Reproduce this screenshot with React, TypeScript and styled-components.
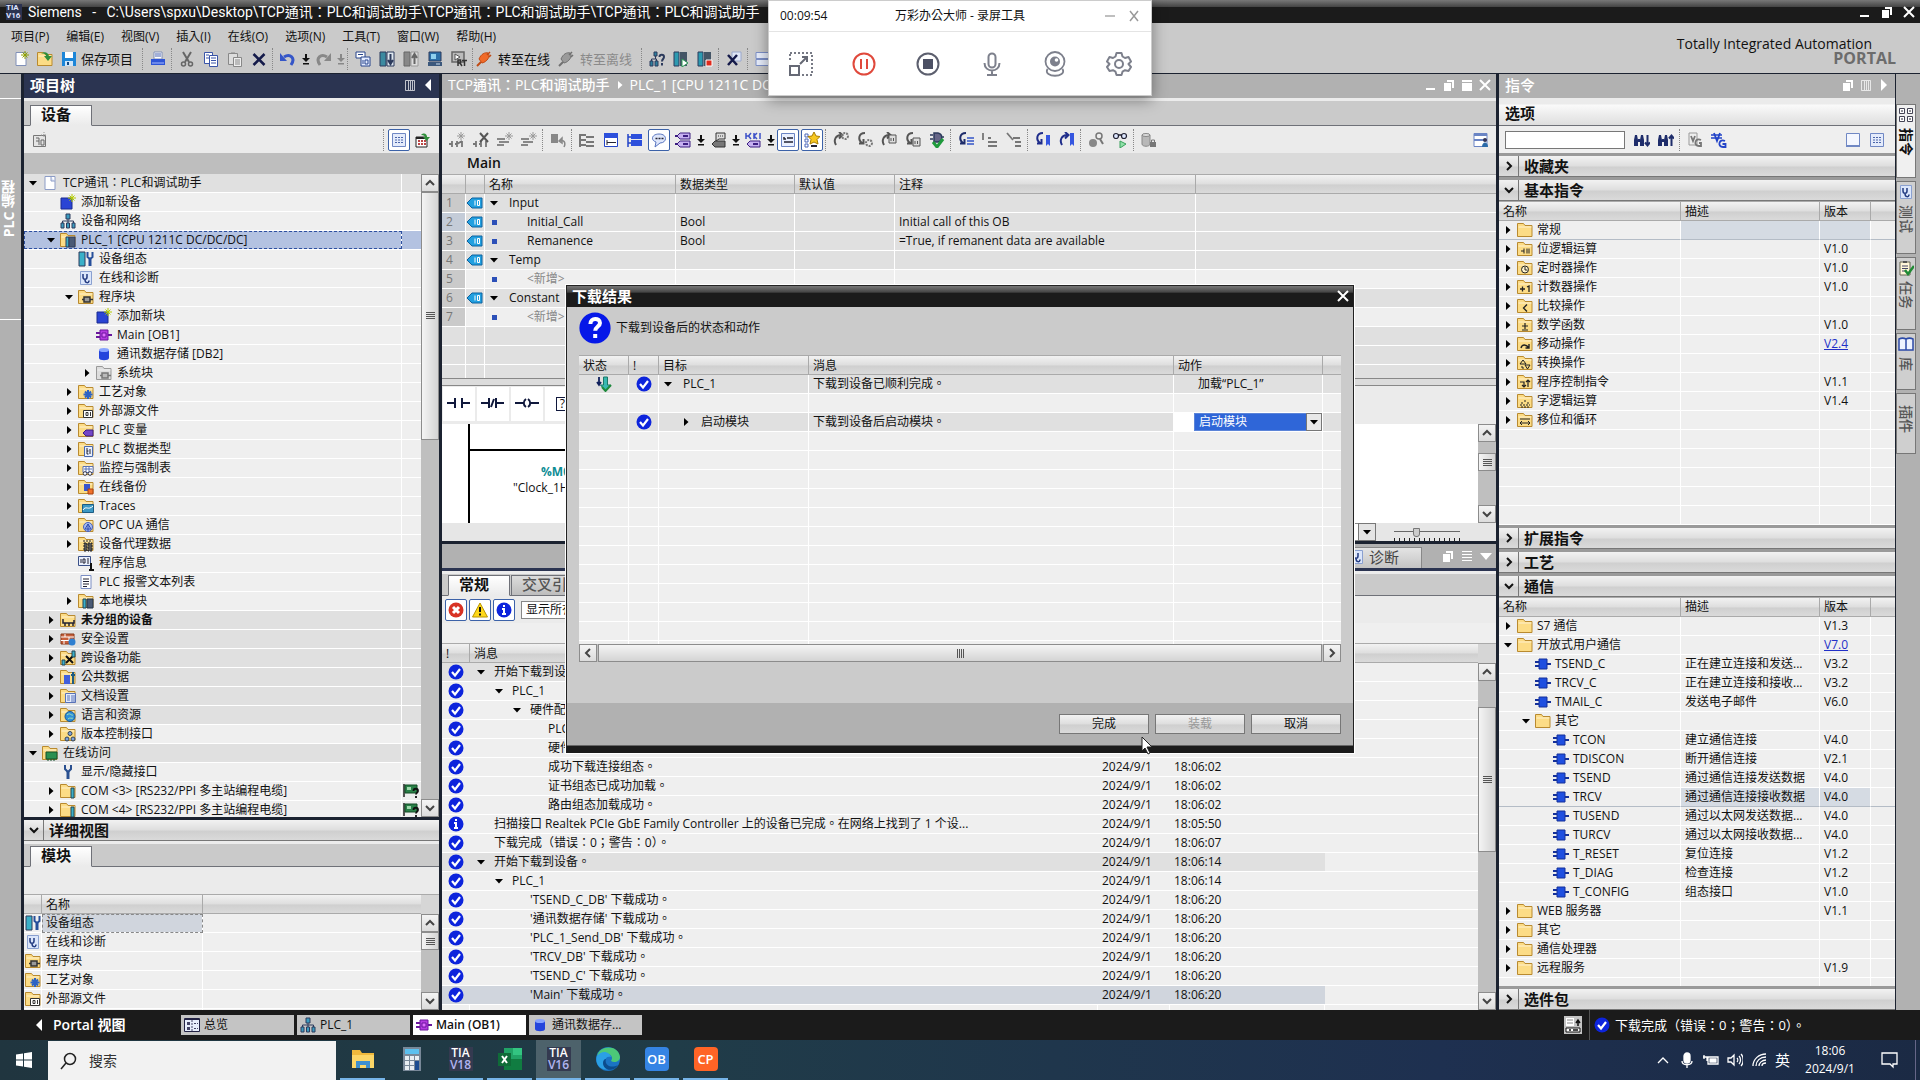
import React, { ReactNode } from 'react';
import styled, { createGlobalStyle, css } from 'styled-components';

const Global = createGlobalStyle`
  *, *::before, *::after { box-sizing: border-box; }
  body { margin: 0; overflow: hidden; font: 12px/18px "Open Sans", "Noto Sans CJK TC", "Noto Sans CJK SC", sans-serif; color: #111; }
  button, input, select { font: inherit; color: inherit; margin: 0; border-radius: 0; }
  button { background: none; border: 0; padding: 0; }
  ul { list-style: none; margin: 0; padding: 0; }
  h1, h2, h3, p { margin: 0; font: inherit; }
  svg { display: block; flex: none; }
`;

/* ---------- icons ---------- */
const dark = '#2c3a5c';
const grey = '#777';
const folder = (badge?: ReactNode, fill = '#fcdc86', line = '#b98a2f') => (
  <>
    <path d="M.500 1.500h6l1.500 2h7v11h-14.500z" fill={fill} stroke={line} />
    <path d="M1.500 5h13" stroke="#fff" opacity=".6" />
    {badge}
  </>
);
const block = (fill: string, line: string) => (
  <>
    <path d="M0 6h4M0 10h4M12 8h4" stroke={line} strokeWidth="2" />
    <path d="M4 3h8v10h-8z" fill={fill} stroke={line} />
  </>
);
const cylinder = (a: string, b: string) => (
  <>
    <path d="M3 4v8c0 3 10 3 10 0V4z" fill={a} />
    <ellipse cx="8" cy="4" rx="5" ry="2" fill={b} />
  </>
);
const page = (line = '#5a6ea8', inner?: ReactNode) => (
  <>
    <path d="M3 1.500h10v13h-10z" fill="#fff" stroke={line} />
    {inner}
  </>
);
const spark = (c: string) => <path d="M12 0v8M8 4h8M9.500 1.500l5 5M14.500 1.500l-5 5" stroke={c} strokeWidth="1" />;
const lines = (c: string) => <path d="M5 5h6M5 7.500h6M5 10h6M5 12.500h4" stroke={c} />;
const binoc = (up: boolean) => (
  <>
    <path d="M0 8l1-5h2l1 5v6H0zM6 8l1-5h2l1 5v6H6zM4 7h2v3H4z" fill="#1f2d6b" />
    <path d={up ? 'M13.500 14V4M11 6.500L13.500 3.500l2.500 3' : 'M13.500 3v10M11 10.500l2.500 3 2.500-3'} stroke="#1f2d6b" strokeWidth="2" fill="none" />
  </>
);
const plug = (c: string, d: string) => (
  <>
    <path d="M1 15l4-4" stroke={d} strokeWidth="2" />
    <path d="M3 8c2-5 6-7 9-6c3 3-1 9-6 10z" fill={c} stroke={d} />
    <path d="M11 4l3-3M13 6l2-2" stroke={d} strokeWidth="1.500" />
  </>
);
const stetho = (
  <>
    <path d="M2.500 1.500h11v13h-11z" fill="#dbe6fb" stroke="#8aa0d0" />
    <path d="M5 4v3c0 3 4 3 4 0V4M7 9.500c0 4 4 4 4 1" fill="none" stroke="#223a80" strokeWidth="1.500" />
  </>
);
const hop = (mirror: boolean, c: string, extra: ReactNode) => (
  <>
    <path d={mirror ? 'M8 1C1 1 1 8 5 11M2 11.500h4.500V7' : 'M3 13C0 8 3 3 8 3M6 0l3.500 3L6 6.500'} fill="none" stroke={c} strokeWidth="2" />
    {extra}
  </>
);
const gearDot = <circle cx="12" cy="11" r="3" fill="none" stroke={grey} strokeWidth="2" strokeDasharray="2 1" />;
const gearDotTop = <circle cx="12" cy="4" r="3" fill="none" stroke={grey} strokeWidth="2" strokeDasharray="2 1" />;
const chip = (y: number) => <path d={`M8 ${y}h7v8h-7zM10 ${y + 3}v3M12.500 ${y + 3}v3`} fill="#ddd" stroke="#555" />;

const icons: Record<string, ReactNode> = {
  newProject: <>{page('#8090b8')}{spark('#8ea000')}</>,
  openProject: <>{folder()}<path d="M4 3c3-3 7-2 8 2h3l-4 5-4-5h2c0-2-2-3-5-2z" fill="#2f8f3a" /></>,
  save: <><path d="M1 1h14v14h-14z" fill="#1d86d8" /><path d="M4 1h8v6h-8z" fill="#fff" /><path d="M4 10h8v5h-8z" fill="#cfe6fa" /><path d="M6 11h2v3h-2z" fill="#124a86" /></>,
  print: <><path d="M4 1h8v7h-8z" fill="#fff" stroke="#8090b8" /><path d="M5 3h6M5 5h6" stroke="#4660b0" /><path d="M1 8h14v6h-14z" fill="#2f55d6" /><path d="M2 12h12" stroke="#a9bcff" /></>,
  cut: <><path d="M4 1l6 10M12 1L6 11" stroke="#666" strokeWidth="2" /><circle cx="4.500" cy="13" r="2" fill="none" stroke="#666" strokeWidth="1.500" /><circle cx="11.500" cy="13" r="2" fill="none" stroke="#666" strokeWidth="1.500" /></>,
  copy: <><path d="M1.500 1.500h8v11h-8z" fill="#fff" stroke="#3a55a8" /><path d="M6.500 4.500h8v11h-8z" fill="#fff" stroke="#3a55a8" /><path d="M3 4h3M3 7h3M8 7h5M8 9.500h5M8 12h5" stroke="#3a55a8" /></>,
  paste: <><path d="M1.500 2.500h9v11h-9z" fill="#ddd" stroke="#888" /><path d="M6.500 6.500h8v9h-8z" fill="#eee" stroke="#888" /><path d="M8 9h5M8 11h5M8 13h5M4 2h4" stroke="#888" /></>,
  del: <path d="M2.500 3l11 11M13.500 3l-11 11" stroke="#141a4a" strokeWidth="2.500" />,
  undo: <><path d="M4 6c6-4 12 1 7 8" fill="none" stroke="#3556c8" strokeWidth="3" /><path d="M0 2v8h7z" fill="#3556c8" /></>,
  redo: <><path d="M12 6C6 2 0 7 5 14" fill="none" stroke="#888" strokeWidth="3" /><path d="M16 2v8H9z" fill="#888" /></>,
  compile: <><path d="M1 1h9v6h-9z" fill="#fff" stroke="#26448c" /><path d="M6 6h9v9h-9z" fill="#e4ecff" stroke="#26448c" /><path d="M3 3.500h5M8 9v4M10 9h3v4h-3z" stroke="#26448c" fill="none" /></>,
  download: <><path d="M1 1h6v14h-6z" fill="#3c8aa0" stroke={dark} /><path d="M8 1h7v14h-7z" fill="#dfe8f0" stroke={dark} /><path d="M11.500 3v9M9 9l2.500 4 2.500-4" stroke={dark} strokeWidth="2" fill="none" /></>,
  upload: <><path d="M1 1h6v14h-6z" fill="#888" stroke="#666" /><path d="M8 1h7v14h-7z" fill="#ddd" stroke="#999" /><path d="M11.500 13V5M9 7l2.500-4 2.500 4" stroke="#666" strokeWidth="2" fill="none" /></>,
  pc: <><path d="M2 1h12v9h-12z" fill="#2c6fa8" stroke={dark} /><path d="M4 3h5v5h-5z" fill="#8fd0ee" /><path d="M1 11h14v4h-14z" fill="#3c587c" /><path d="M9 13h4" stroke="#cde" /></>,
  rt: <><path d="M1 1h12v10h-12z" fill="#bbb" stroke="#666" strokeWidth="1.500" /><path d="M4 3l5 3-5 3z" fill="#fff" stroke="#555" /><path d="M7 15V9h2.500v3H7M9 12l2 3M11 9.500h5M13.500 9.500V15" stroke="#333" strokeWidth="1.500" fill="none" /></>,
  online: plug('#f06a28', '#c04a14'),
  offline: plug('#9a9a9a', '#707070'),
  accessible: <><path d="M5 1h3v4H5zM1 10h3v5H1zM6 10h3v5H6z" fill="#2d7f9c" stroke={dark} /><path d="M6.500 5v3M2.500 10V8h5v2" stroke={dark} fill="none" /><path d="M10.500 6c0-3 4.500-3 4.500 0c0 2-2 2-2 4.500M13 12v2.500" stroke={dark} strokeWidth="2" fill="none" /></>,
  start: <><path d="M1 1h5v14h-5z" fill="#2d9ab0" stroke={dark} /><path d="M7 1h7v14h-7z" fill="#456" /><path d="M9 8l6 4-6 4z" fill="#fff" stroke="#2a9a55" /></>,
  stop: <><path d="M1 1h5v14h-5z" fill="#2d9ab0" stroke={dark} /><path d="M7 1h7v14h-7z" fill="#456" /><path d="M9 9h6v6h-6z" fill="#e02a1c" stroke="#fff" /></>,
  crossRef: <><path d="M6 1h9v9h-9z" fill="#dfe6f6" stroke="#9aa8cc" /><path d="M2 4l9 10M11 4L2 14" stroke="#141a4a" strokeWidth="2.500" /></>,
  split: <path d="M1 1.500h14v6h-14zM1 8.500h14v6h-14z" fill="#e8eefc" stroke="#7d90c8" />,
  project: page('#8c9cc6', <path d="M9 2v4h4" fill="#dfe6f8" stroke="#8c9cc6" />),
  addDevice: <><path d="M1 4h11v11h-11z" fill="#2a44d4" stroke="#1a2a90" />{spark('#b4cc00')}</>,
  network: <><path d="M6 1h4v5h-4zM1 10h3v5h-3zM6.500 10h3v5h-3zM12 10h3v5h-3z" fill="#3a9cc0" stroke={dark} /><path d="M8 6v4M2.500 10V8h11v2" stroke={dark} fill="none" /></>,
  plc: folder(<><path d="M6 5h3v10h-3z" fill="#3ab0c8" stroke={dark} /><path d="M9 5h6v10h-6z" fill="#4a5a74" stroke={dark} /></>),
  config: <><path d="M1 1h6v14h-6z" fill="#3ab0c8" stroke={dark} /><path d="M12 8v7" stroke="#264f9a" strokeWidth="3" /><path d="M9.500 1v5l2.500 2 2.500-2V1" fill="none" stroke="#264f9a" strokeWidth="2" /></>,
  diag: stetho,
  blocks: folder(<path d="M6 8h6v5h-6zM4 10.500h2M12 10.500h3" fill="#999" stroke="#333" strokeWidth="1.500" />),
  sysBlocks: folder(<path d="M6 8h6v5h-6zM4 10.500h2M12 10.500h3" fill="#bbb" stroke="#777" strokeWidth="1.500" />, '#ddd', '#999'),
  ob: <>{block('#b43ae0', '#6a169c')}<path d="M6 6h4v4H6z" fill="#e070ff" stroke="#6a169c" /></>,
  fb: block('#1f4fe0', '#14309a'),
  db: cylinder('#2444dc', '#86a2ff'),
  tech: folder(<path d="M10 6v9M5.500 10.500h9M7 7.500l6 6M13 7.500l-6 6" stroke="#2c62c4" strokeWidth="2" />),
  source: folder(<><path d="M5.500 7.500h9v7h-9z" fill="#fff" stroke="#333" /><path d="M8 9.500h2v3h-2zM12.500 9v4" fill="none" stroke="#333" /></>),
  tags: folder(<path d="M5 11l3-3h7v6h-7z" fill="#7446c8" stroke="#3c1e80" />),
  types: folder(<><path d="M6.500 5.500h8v10h-8z" fill="#e8f0ff" stroke="#4a6ab0" /><path d="M9 7v6h1.500M9 10h1.500M12 8v5" stroke="#223" fill="none" /></>),
  watch: folder(<><path d="M5 6.500h10v6h-10z" fill="#fff" stroke="#5872b8" /><path d="M6 9h8M8 7v5M11 7v5" stroke="#5872b8" /><circle cx="7" cy="13.500" r="1.800" fill="#fff" stroke="#334" /><circle cx="12" cy="13.500" r="1.800" fill="#fff" stroke="#334" /></>),
  backup: folder(<><path d="M6 5h6v7h-6z" fill="#3a56cc" /><path d="M10 10h5v5h-5z" fill="#f0722c" stroke="#a84010" /></>),
  traces: folder(<><path d="M4.500 6.500h11v8h-11z" fill="#3c98c4" stroke="#1c5c84" /><path d="M5 12c3-5 5 1 10-4" stroke="#fff" fill="none" /></>),
  opc: folder(<><circle cx="10" cy="10" r="4.500" fill="#a9bdf0" stroke="#4660c0" /><path d="M7 12l3-5 3 5zM10 7v7" stroke="#2c48b0" fill="none" /></>),
  proxy: folder(<path d="M6 7h3v8h-3zM10 7h4v8h-4zM5 5h9" fill="#555" stroke="#222" strokeDasharray="2 1" />),
  info: <><path d="M.500 1.500h12v9h-12z" fill="#eaf0fc" stroke="#3a5088" /><path d="M3 4v4M5 4h2v4H5zM10 3v6" stroke="#223" fill="none" /><path d="M13 8v7M11 15h5" stroke="#111" strokeWidth="2" /></>,
  alarmText: page('#7b8ec4', lines('#223')),
  modules: folder(<><path d="M5 6h3v9h-3z" fill="#3ab0c8" stroke="#245" /><path d="M9 6h6v9h-6z" fill="#4a5a74" stroke="#234" /></>),
  ungrouped: folder(<path d="M3 7v4h11V8M5 11v3M9 11v3M13 11v3" stroke="#223" strokeWidth="1.500" fill="none" />),
  security: <><path d="M1 3h13v10h-13z" fill="#c8603c" stroke="#8a3818" /><path d="M1 6h13M1 9.500h13M5 3v3M9 6v4M4 9.500V13" stroke="#fff" /><circle cx="12" cy="11" r="3.500" fill="#2f7fd0" /></>,
  cross: folder(<><path d="M6 6l7 7M13 6l-7 7" stroke="#111" strokeWidth="2" /><path d="M12 1h3v6h-3zM2 10h3v5h-3z" fill="#3ab0c8" stroke="#245" /></>),
  common: folder(<><path d="M4 6h6v9h-6z" fill="#4260dc" /><path d="M13 3v12M11 6h4" stroke="#1e5c84" strokeWidth="2" /></>),
  docs: folder(<><path d="M5.500 5.500h10v9h-10z" fill="#e4ecfc" stroke="#5872b8" /><path d="M7 8h3M7 10h3M7 12h3M12 7v7M14 7v7" stroke="#5872b8" /></>),
  lang: folder(<><circle cx="10" cy="9.500" r="5" fill="#2f8fd8" stroke="#1a5890" /><path d="M7 8c3-3 4 1 6 0M8 12c2-2 4 0 5-1" stroke="#9fe0b0" fill="none" /></>),
  version: folder(<><circle cx="10" cy="7.500" r="2" fill="#7fa4e0" stroke="#345" /><circle cx="7" cy="13" r="2" fill="#7fa4e0" stroke="#345" /><circle cx="13" cy="13" r="2" fill="#7fa4e0" stroke="#345" /></>),
  access: folder(<path d="M4 7h11v7h-11zM6 14v2M9 14v2M12 14v2" fill="#2a9050" stroke="#14502a" />),
  wrench: <><path d="M8 7v8" stroke="#2a5090" strokeWidth="3" /><path d="M5 1v4l3 3 3-3V1" fill="none" stroke="#2a5090" strokeWidth="2" /></>,
  com: folder(<path d="M11 5h3v10h-3z" fill="#3ab0c8" stroke="#245" />),
  card: <><path d="M1 2v13" stroke="#222" strokeWidth="1.500" /><path d="M2 3h12v8h-12z" fill="#2a8048" stroke="#124a24" /><path d="M4 5h4v3h-4z" fill="#9fd8ac" /><path d="M10.500 9c0-3 4.500-3 4.500 0c0 2-2 1.500-2 3.500M13 14v2" stroke="#111" strokeWidth="1.800" fill="none" /></>,
  folder: folder(),
  fBit: folder(<path d="M4 10h3M7 7.500v5M10 7.500v5M12 7.500v5" stroke="#222" />),
  fTimer: folder(<><circle cx="8" cy="9.500" r="3.500" fill="#fff3cc" stroke="#222" /><path d="M8 7v3h2.500" stroke="#222" fill="none" /></>),
  fCount: folder(<path d="M3 10h5M5.500 7.500v5M10 8l2-1v6" stroke="#222" fill="none" strokeWidth="1.300" />),
  fCmp: folder(<path d="M10 6.500L6.500 10l3.500 3.500" stroke="#222" fill="none" strokeWidth="1.300" />),
  fMath: folder(<path d="M5 9h6M8 6v6M5 13h6" stroke="#222" strokeWidth="1.200" />),
  fMove: folder(<path d="M4 12c1-4 5-4 8 0M12 8v4H8.500" stroke="#222" fill="none" strokeWidth="1.400" />),
  fConv: folder(<path d="M3 9l3-4 3 4zM8 10h5l-2.500 4zM5 11v2h2" stroke="#222" fill="none" />),
  fCtrl: folder(<path d="M3 8h4v5M5 11l2 2 2-2M9 8l2-2 2 2M11 6v7" stroke="#222" fill="none" strokeWidth="1.200" />),
  fWord: folder(<path d="M3 12h10M8 7v2M5 9v2M11 9v2M4 14h9" stroke="#222" strokeDasharray="2 1" />),
  fShift: folder(<path d="M3 11h10M5 9l-2 2 2 2M11 9l2 2-2 2M3 7h10" stroke="#222" fill="none" />),
  addFolder: <><path d="M1.500 3.500h12v11h-12z" fill="#e4e4e4" stroke={grey} /><path d="M4 6h3v7M4 9h3M9 8h3v5H9z" stroke="#666" fill="none" /><path d="M12 0v6M9 3h6" stroke="#999" strokeDasharray="1 1" /></>,
  listView: <><path d="M1.500 1.500h13v13h-13z" fill="#e4ebfb" stroke="#7088c4" /><path d="M4 5.500h8M4 8h8M4 10.500h8" stroke="#4a64a8" strokeDasharray="2 1" /></>,
  plainView: <><path d="M1.500 1.500h13v13h-13z" fill="#f4f7ff" stroke="#7088c4" /><path d="M1 14h14" stroke="#7088c4" strokeWidth="2" /></>,
  exportList: <><path d="M1 5h11v10h-11z" fill="#fff" stroke="#222" /><path d="M1 6h11" stroke="#222" strokeWidth="2" /><path d="M3 9h8M3 12h8" stroke="#b44" strokeDasharray="2 1" strokeWidth="2" /><path d="M6 3c3-3 6-1 6 2h3l-3.500 4L8 5h2c0-1-1-2-4-2z" fill="#2f8f3a" /></>,
  tag: <><path d="M5 3h10v10h-10l-5-5z" fill="#22a0e0" stroke="#0c62a0" /><path d="M8 5.500v5M10.500 5.500h2v5h-2z" stroke="#fff" fill="none" /></>,
  contactNew: <><path d="M0 12h3M3 9v6M8 9v6M6 12h2l5-3M13 9v6" stroke={grey} strokeWidth="1.800" />{spark('#999')}</>,
  contactDel: <><path d="M0 12h3M3 9v6M8 9v6M6 12h2M13 9v6" stroke={grey} strokeWidth="1.800" /><path d="M7 1l8 9M15 1l-8 9" stroke="#555" strokeWidth="2" /></>,
  rowNew: <><path d="M0 7h8M2 10h10M0 13h7" stroke="#888" strokeWidth="2" />{spark('#999')}</>,
  dbUndo: <><path d="M1 2h7v9h-7z" fill="#888" /><path d="M10 9c4-2 6 2 4 6M9 9l3-3v5z" stroke="#888" strokeWidth="1.500" fill="none" /></>,
  rowsGrey: <path d="M1 3h6M1 8h6M1 13h6M7 5h8M7 10h8M7 14h8M1 2v13" stroke="#777" strokeWidth="2" />,
  netOpen: <><path d="M1.500 1.500h13v13h-13z" fill="#fff" stroke="#2344c8" /><path d="M1 1h14v5h-14z" fill="#2d50dc" /><path d="M4 10.500h9M4 8v5" stroke="#223" /></>,
  netClose: <><path d="M4 2h11v5h-11zM4 8h11v6h-11z" fill="#2d50dc" /><path d="M1 2v13M1 5h3M1 11h3" stroke="#2344c8" strokeWidth="1.500" /></>,
  comment: <><path d="M8 2c9 0 8 9 1 9l-5 4 1-5c-6-2-4-8 3-8z" fill="#dfe7fb" stroke="#5a76c0" /><path d="M4.500 6.500h2M7.500 6.500h2M10.500 6.500h2" stroke="#223" strokeWidth="1.500" /></>,
  tagPair: <><path d="M5 1h10v6h-10l-3-3z" fill="#c6b0f0" stroke="#3c1e80" /><path d="M5 9h10v6h-10l-3-3z" fill="#c6b0f0" stroke="#3c1e80" /><path d="M0 4h3M0 12h3M8 4h5M8 12h5" stroke="#3c1e80" strokeWidth="2" /></>,
  tagGrey: <><path d="M6 1h9v6h-6l-3 2z" fill="#ddd" stroke="#333" /><path d="M5 9h10v6h-10l-3-3z" fill="#777" stroke="#333" /><path d="M8 4h5" stroke="#333" strokeDasharray="1 1" /></>,
  tagKey: <><path d="M1 1v6M1 4h3M6 1L3.500 4L6 7M9 1v6M12 1l-3 3 3 3M15 1v6" stroke="#3c50c8" strokeWidth="1.500" fill="none" /><path d="M5 9h10v6h-10l-3-3z" fill="#c6b0f0" stroke="#3c1e80" /><path d="M8 12h5" stroke="#3c1e80" strokeWidth="2" /></>,
  netView: <><path d="M1.500 1.500h13v13h-13z" fill="#eaf0ff" stroke="#6a84c4" /><path d="M4 5v2h2M7 6h6M4 10h9" stroke="#223" strokeWidth="1.500" fill="none" /></>,
  star: <><path d="M1 2h3v3h-3zM1 7h3v3h-3zM1 12h3v3h-3z" fill="#fff" stroke="#4a66b8" /><path d="M10 0l2 4 4 .500-3 3 1 4.500-4-2-4 2 1-4.500-3-3 4-.500z" fill="#f8c820" stroke="#a87c00" /><path d="M7 14h6" stroke="#223" strokeWidth="2" /></>,
  hop1: hop(false, '#555', gearDotTop),
  hop2: hop(true, '#555', gearDot),
  hop3: hop(false, '#555', chip(3)),
  hop4: hop(true, '#555', chip(6)),
  verify: <><path d="M1 3h3M1 7h3M5 1h4c5 1 5 8 0 9H5zM12 5h3" fill="#668" stroke={dark} strokeWidth="1.500" /><path d="M4 10l4 5 6-8" stroke="#1f9a3c" strokeWidth="3" fill="none" /></>,
  goLine: hop(true, '#1f2d6b', <path d="M9 6h7M9 9h7M9 12h7" stroke="#3556c8" strokeWidth="1.500" />),
  indent: <path d="M1 1v7M6 6h3M6 10h9M6 14h9" stroke={grey} strokeWidth="1.800" />,
  outdent: <path d="M1 1l6 7M7 6h7M9 10h6M9 14h6" stroke={grey} strokeWidth="1.800" />,
  jumpDown: hop(true, '#1f2d8b', <path d="M11 3h4v11l-2-2-2 2z" fill="#3556e0" />),
  jumpUp: hop(false, '#1f2d8b', <path d="M11 1h4v13l-2-2-2 2z" fill="#3556e0" />),
  searchNode: <><circle cx="5" cy="11" r="4" fill="#888" /><circle cx="11" cy="4" r="3" fill="#eee" stroke="#777" strokeWidth="1.500" /><path d="M12 7l3 5" stroke="#777" strokeWidth="2" /></>,
  glasses: <><circle cx="4" cy="4" r="2.500" fill="#dfe8ff" stroke="#223" strokeWidth="1.200" /><circle cx="12" cy="4" r="2.500" fill="#dfe8ff" stroke="#223" strokeWidth="1.200" /><path d="M6 3h4" stroke="#223" strokeWidth="1.500" /><path d="M8 9l6 3-6 4z" fill="#8fe0a8" stroke="#3aa05c" /></>,
  dbLock: <><path d="M1 3v9c0 3 8 3 8 0V3z" fill="#b8b8b8" stroke="#888" /><ellipse cx="5" cy="3" rx="4" ry="1.500" fill="#ddd" stroke="#888" /><path d="M9 10h6v5h-6z" fill="#777" /><path d="M10.500 10V8h3v2" stroke="#777" fill="none" /></>,
  layoutUser: <><path d="M1 1.500h13v13h-13z" fill="#fff" stroke="#6a84c4" /><path d="M1 3h13M1 8h13" stroke="#6a84c4" strokeWidth="2" /><circle cx="12" cy="8" r="2" fill="#335" /><path d="M9 15c0-6 6-6 6 0z" fill="#2a6aa8" /></>,
  find: binoc(false),
  findUp: binoc(true),
  vGrey: <><path d="M2 1h8v12h-8z" fill="#eee" stroke="#999" /><path d="M4 4l2 5 2-5M14 8c-6-3-8 6-2 6h2v-3h-2" stroke={grey} strokeWidth="1.800" fill="none" /></>,
  vBlue: <><path d="M0 3h11M0 6h11" stroke="#2344c8" strokeWidth="1.500" /><path d="M3 1l3 8 3-8M14 9c-6-3-8 6-2 6h2.500v-3h-3" stroke="#2344c8" strokeWidth="1.800" fill="none" /></>,
  grid: <><path d="M1.500 1.500h5v5h-5zM9.500 1.500h5v5h-5zM1.500 9.500h5v5h-5zM9.500 9.500h5v5h-5z" fill="#fff" stroke="#445" /><path d="M3 4h2M11 4h2M3 12h2M11 12h2" stroke="#223" /></>,
  task: <><path d="M2 2h10v13h-10z" fill="#fff6d8" stroke="#665" /><path d="M5 1h4v2h-4z" fill="#555" /><path d="M4 6h6M4 8.500h6M4 11h4" stroke="#446" /><path d="M7 10l3 4 6-8" stroke="#1f8a34" strokeWidth="2.500" fill="none" /></>,
  book: <path d="M1 3c3-1.500 5-1 7 0c2-1 4-1.500 7 0v11H1zM8 3v11" fill="#eef3ff" stroke="#2c4aa8" strokeWidth="1.500" />,
  ok: <><circle cx="8" cy="8" r="7.500" fill="#0d24dc" /><path d="M4 8l3 3.500L12 5" stroke="#fff" strokeWidth="2.200" fill="none" /></>,
  infoMark: <><circle cx="8" cy="8" r="7.500" fill="#0d24dc" /><path d="M8 3v2M6 7h2v5M6 12h4" stroke="#fff" strokeWidth="2" fill="none" /></>,
  errMark: <><circle cx="8" cy="8" r="7.500" fill="#d83324" /><path d="M5 5l6 6M11 5l-6 6" stroke="#fff" strokeWidth="3" /></>,
  warnMark: <><path d="M8 1l7.500 14h-15z" fill="#ffd818" stroke="#b89400" /><path d="M8 5v5M8 11.500v2" stroke="#111" strokeWidth="2" /></>,
  loadDown: <><path d="M3 1v8M1 6l2 3 2-3" stroke="#10205c" strokeWidth="1.800" fill="none" /><path d="M7.500 1h4v8h3l-5 6-5-6h3z" fill="#38b8b0" stroke="#1c7868" /><path d="M6 11l3.500 4L15 9" stroke="#1f8a3c" strokeWidth="2" fill="none" /></>,
  question: <><circle cx="8" cy="8" r="7.800" fill="#0618e8" /><path d="M5.700 6C5.700 2.600 10.500 2.800 10.500 5.500C10.500 7.200 8.100 7.300 8.100 9.400M8.100 11v2" stroke="#fff" strokeWidth="2" fill="none" /></>,
  overview: <><path d="M.500 1.500h15v13h-15z" fill="#e8eefc" stroke="#224" /><path d="M1 2h14" stroke="#224" strokeWidth="2" /><path d="M3 5h3v3h-3zM3 10h3v3h-3z" fill="#446" /><path d="M8 3v11M10 6.500h4M10 11.500h4" stroke="#446" strokeDasharray="2 1" /></>,
  statusCard: <><path d="M1 1h8v8h-8z" fill="#fff" /><path d="M2 3h6M2 6h6" stroke="#888" /><path d="M1 11h14v4h-14z" fill="#fff" stroke="#111" /><path d="M4 13h2M8 13h5M13 9V4M11 6l2-3 2 3" stroke="#111" strokeWidth="1.500" fill="none" /></>,
};

const Icon = ({ name, size = 16 }: { name: string; size?: number }) => (
  <svg width={size} height={size} viewBox="0 0 16 16" fill="none" aria-hidden="true">{icons[name]}</svg>
);
const DropMark = ({ color = '#111' }: { color?: string }) => (
  <svg width="8" height="12" viewBox="0 0 8 12" aria-hidden="true"><path d="M3 1h2v4h3L4 9L0 5h3zM1 10h6v1.500H1z" fill={color} /></svg>
);
const Tri = ({ open, color = '#000' }: { open?: boolean; color?: string }) => (
  <svg width="8" height="8" viewBox="0 0 8 8" aria-hidden="true"><path d={open ? 'M0 2h8L4 6.500z' : 'M2 0v8l4.500-4z'} fill={color} /></svg>
);
const Chev = ({ dir, color = '#444', size = 10 }: { dir: 'up' | 'down' | 'left' | 'right'; color?: string; size?: number }) => {
  const d = { up: 'M1 7l4-4 4 4', down: 'M1 3l4 4 4-4', left: 'M7 1L3 5l4 4', right: 'M3 1l4 4-4 4' }[dir];
  return <svg width={size} height={size} viewBox="0 0 10 10" aria-hidden="true"><path d={d} fill="none" stroke={color} strokeWidth="2" /></svg>;
};
const winGlyph: Record<string, ReactNode> = {
  min: <path d="M1 9h9v2H1z" fill="#fff" />,
  restore: <><path d="M4 1h7v8H9V3H4z" fill="#fff" /><path d="M1 4h7v8H1z" fill="#fff" /></>,
  max: <><path d="M1 1h10v2H1zM1 4h10v8H1z" fill="#fff" /></>,
  close: <path d="M1 1l10 10M11 1L1 11" stroke="#fff" strokeWidth="2" />,
  cols: <path d="M1.500 1.500h9v10h-9zM4.500 2v9M6.500 2v9M8.500 2v9" fill="none" stroke="#fff" strokeOpacity=".7" />,
  rows: <path d="M1 1.500h10M1 4.500h10M1 7.500h10M1 10.500h10" stroke="#fff" />,
  left: <path d="M9 0v12L3 6z" fill="#fff" />,
  right: <path d="M3 0v12l6-6z" fill="#fff" />,
  down: <path d="M0 3h12L6 10z" fill="#fff" />,
};
const WinGlyph = ({ name }: { name: string }) => (
  <svg width="12" height="12" viewBox="0 0 12 12" aria-hidden="true">{winGlyph[name]}</svg>
);

/* ---------- shared parts ---------- */
const bevel = 'linear-gradient(#f2f2f2, #dedede 50%, #cfcfcf 55%, #dadada)';
const Screen = styled.div`display: flex; flex-direction: column; height: 100vh; background: #1b2230;`;
const Desktop = styled.main`position: relative; flex: 1; min-height: 0; display: flex; flex-direction: column;`;
const TitleBar = styled.header`
  height: 23px; flex: none; display: flex; align-items: center; gap: 6px; padding: 0 3px 0 6px; color: #fff; font-size: 14px;
  font-family: Roboto, "Noto Sans CJK TC", "Noto Sans CJK SC", sans-serif;
  background: linear-gradient(#777, #444 30%, #1b1b1b 31%);
`;
const AppBadge = styled.span`width: 16px; font-size: 8px; line-height: 8px; color: #dfe3ff; font-weight: 700; background: #2c3350;`;
const TitleText = styled.h1`flex: 1; white-space: pre;`;
const GlyphButton = styled.button`display: flex; align-items: center; justify-content: center; width: 16px; height: 16px;`;
const Head = styled.div`height: 51px; flex: none; display: flex; justify-content: space-between; background: #cacaca; border-bottom: 1px solid #1b2230;`;
const MenuBar = styled.nav`display: flex; height: 24px; align-items: center; gap: 17px; padding: 4px 11px 0; font-size: 12px;`;
const Brand = styled.div`display: flex; flex-direction: column; padding: 13px 24px 0 0; text-align: right; font-size: 14px; line-height: 15px; font-weight: 500;`;
const BrandLine = styled.span`padding-right: 24px;`;
const BrandPortal = styled.span`font-size: 16px; font-weight: 700; color: #6c6c6c;`;
const Bar = styled.div<{ $pad?: number; $h?: number }>`display: flex; align-items: center; flex: none; height: ${p => p.$h ?? 27}px; padding: 0 ${p => p.$pad ?? 3}px;`;
const ToolButton = styled.button<{ $on?: boolean; $narrow?: boolean }>`
  display: flex; align-items: center; justify-content: center; width: ${p => (p.$narrow ? 11 : 24)}px; height: 22px;
  ${p => p.$on && css`width: 22px; margin: 0 1px; background: #fff; border: 1px solid #3c62a8; border-radius: 2px;`}
`;
const TextButton = styled.button<{ $off?: boolean }>`display: flex; align-items: center; gap: 6px; padding-right: 8px; height: 22px; font-size: 13px; color: ${p => (p.$off ? '#8a8a8a' : '#111')};`;
const Sep = styled.span`width: 5px; height: 22px; flex: none; border-left: 1px dotted #888; margin-left: 1px; margin-right: -1px;`;
const Spacer = styled.span`flex: 1;`;
const Work = styled.div`flex: 1; min-height: 0; display: flex; gap: 3px;`;
const PanelHead = styled.header<{ $active?: boolean; $small?: boolean }>`
  display: flex; align-items: center; gap: 6px; flex: none; height: 24px; padding: 0 5px 2px 6px; color: #fff; font-size: ${p => (p.$small ? 14 : 15)}px; white-space: pre;
  background: ${p => (p.$active ? '#2b3451' : '#b1b1b1')}; font-weight: ${p => (p.$active ? 700 : 500)};
`;
const Strip = styled.div<{ $h?: number }>`
  display: flex; align-items: flex-end; gap: 1px; height: ${p => p.$h ?? 28}px; flex: none; padding-left: 6px;
  background: #cacaca; border-top: 3px solid #ececec; border-bottom: 1px solid #6f7178;
`;
const Tab = styled.button<{ $off?: boolean }>`
  display: flex; align-items: flex-start; min-width: 62px; height: 21px; padding: 0 10px; font-size: 15px; line-height: 17px; font-weight: 700; margin-bottom: -1px;
  border: 1px solid #6f7178; border-bottom-color: ${p => (p.$off ? '#6f7178' : '#ebebeb')}; white-space: nowrap;
  background: ${p => (p.$off ? 'linear-gradient(#dcdcdc, #bdbdbd)' : 'linear-gradient(#fff, #ebebeb)')}; ${p => p.$off && 'color: #555; font-weight: 500;'}
`;
const Row = styled.div`flex: 1; display: flex; min-height: 0;`;
const Clip = styled.div<{ $bg?: string }>`flex: 1; min-width: 0; min-height: 0; overflow: hidden; background: ${p => p.$bg ?? '#efefef'};`;

const Table = styled.table`
  width: 100%; table-layout: fixed; border-collapse: separate; border-spacing: 0;
  th { height: 20px; padding: 0 4px; text-align: left; font-weight: 400; background: ${bevel}; border-top: 1px solid #aaa; border-bottom: 1px solid #aaa; border-right: 1px solid #aaa; line-height: 17px; overflow: hidden; }
  td { height: 19px; padding: 0 4px; line-height: 18px; border-bottom: 1px solid #fff; border-right: 1px solid #fff; overflow: hidden; white-space: nowrap; text-overflow: ellipsis; }
  th:last-child, td:last-child { border-right: 0; }
`;
const Tr = styled.tr<{ $bg?: string; $sel?: boolean }>`
  background: ${p => p.$bg ?? 'transparent'};
  ${p => p.$sel && css`td { border-bottom-color: #b4bcc6; } td:nth-child(2), td:nth-child(3) { background: #d5dbe3; }`}
`;
const Cell = styled.span<{ $lvl?: number }>`display: flex; align-items: center; height: 18px; padding-left: ${p => (p.$lvl ?? 0) * 18}px;`;
const Slot = styled.span<{ $w?: number }>`display: flex; flex: none; justify-content: center; width: ${p => p.$w ?? 18}px;`;
const Link = styled.a`color: #2230c8; text-decoration: underline;`;
const Cols = ({ w }: { w: (number | null)[] }) => <colgroup>{w.map((x, i) => <col key={i} width={x ?? undefined} />)}</colgroup>;
const Blank = ({ n, c, bg }: { n: number; c: number; bg?: string }) => (
  <>{Array.from({ length: n }, (_, i) => <Tr key={i} $bg={bg}>{Array.from({ length: c }, (_, j) => <td key={j} />)}</Tr>)}</>
);

const Track = styled.div<{ $flat?: boolean }>`display: flex; flex: none; flex-direction: ${p => (p.$flat ? 'row' : 'column')}; ${p => (p.$flat ? 'height: 18px; gap: 1px;' : 'width: 18px;')} background: #bfbfbf;`;
const TrackButton = styled.button`display: flex; flex: none; align-items: center; justify-content: center; width: 18px; height: 18px; background: linear-gradient(#f4f4f4, #dcdcdc); border: 1px solid #8c8c8c;`;
const Thumb = styled.div<{ $grow: number; $flat?: boolean }>`
  flex: ${p => p.$grow} 0 18px; display: flex; align-items: center; justify-content: center; border: 1px solid #8c8c8c; min-height: 18px;
  background: linear-gradient(${p => (p.$flat ? '180deg' : '90deg')}, #f4f4f4, #d4d4d4);
`;
const Gap = styled.span<{ $grow: number }>`flex: ${p => p.$grow} 0 0;`;
const Grip = ({ flat }: { flat?: boolean }) => (
  <svg width="9" height="9" viewBox="0 0 9 9" aria-hidden="true"><path d={flat ? 'M1.500 0v9M3.500 0v9M5.500 0v9M7.500 0v9' : 'M0 1.500h9M0 3.500h9M0 5.500h9M0 7.500h9'} stroke="#555" /></svg>
);
const VScroll = ({ before, size, after }: { before: number; size: number; after: number }) => (
  <Track>
    <TrackButton aria-label="向上"><Chev dir="up" /></TrackButton>
    <Gap $grow={before} /><Thumb $grow={size}><Grip /></Thumb><Gap $grow={after} />
    <TrackButton aria-label="向下"><Chev dir="down" /></TrackButton>
  </Track>
);

/* ---------- left side ---------- */
const Rail = styled.aside`width: 21px; flex: none; background: #b1b1b1; display: flex; flex-direction: column; padding-top: 24px;`;
const RailLabel = styled.button`
  height: 222px; border-top: 1px solid #fff; border-bottom: 1px solid #fff; color: #fff; font-size: 14px; font-weight: 700; display: flex; align-items: center; padding-right: 3px; justify-content: center;
  span { writing-mode: vertical-rl; transform: rotate(180deg); }
`;
const Left = styled.section`width: 415px; flex: none; display: flex; flex-direction: column; background: #ebebeb; min-height: 0;`;
const GreyBand = styled.div`height: 21px; flex: none; background: #bebebe;`;
const TreeRow = styled.li<{ $dark?: boolean; $sel?: boolean; $strong?: boolean }>`
  display: grid; grid-template-columns: minmax(0, 1fr) 18px; column-gap: 1px; height: 19px; border-bottom: 1px solid #fff; background: ${p => (p.$sel ? '#b3c2e1' : p.$dark ? '#e0e0e0' : '#efefef')};
  font-weight: ${p => (p.$strong ? 700 : 400)};
`;
const TreeCell = styled.span<{ $lvl: number; $sel?: boolean }>`
  display: flex; align-items: center; padding-left: ${p => p.$lvl * 18}px; border-right: 1px solid #fff; white-space: pre;
  ${p => p.$sel && 'outline: 1px dashed #2c4fa0; outline-offset: -1px;'}
`;
const TreeText = styled.span`padding-left: 5px;`;

type Node = [number, string, string, ('o' | 'c' | '')?, ('d' | 's' | 'b' | 'q')?];
const tree: Node[] = [
  [0, 'project', 'TCP通讯：PLC和调试助手', 'o', 'd'],
  [1, 'addDevice', '添加新设备'],
  [1, 'network', '设备和网络'],
  [1, 'plc', 'PLC_1 [CPU 1211C DC/DC/DC]', 'o', 's'],
  [2, 'config', '设备组态'],
  [2, 'diag', '在线和诊断'],
  [2, 'blocks', '程序块', 'o'],
  [3, 'addDevice', '添加新块'],
  [3, 'ob', 'Main [OB1]'],
  [3, 'db', '通讯数据存储 [DB2]'],
  [3, 'sysBlocks', '系统块', 'c'],
  [2, 'tech', '工艺对象', 'c'],
  [2, 'source', '外部源文件', 'c'],
  [2, 'tags', 'PLC 变量', 'c'],
  [2, 'types', 'PLC 数据类型', 'c'],
  [2, 'watch', '监控与强制表', 'c'],
  [2, 'backup', '在线备份', 'c'],
  [2, 'traces', 'Traces', 'c'],
  [2, 'opc', 'OPC UA 通信', 'c'],
  [2, 'proxy', '设备代理数据', 'c'],
  [2, 'info', '程序信息'],
  [2, 'alarmText', 'PLC 报警文本列表'],
  [2, 'modules', '本地模块', 'c'],
  [1, 'ungrouped', '未分组的设备', 'c', 'b'],
  [1, 'security', '安全设置', 'c', 'd'],
  [1, 'cross', '跨设备功能', 'c', 'd'],
  [1, 'common', '公共数据', 'c', 'd'],
  [1, 'docs', '文档设置', 'c', 'd'],
  [1, 'lang', '语言和资源', 'c', 'd'],
  [1, 'version', '版本控制接口', 'c'],
  [0, 'access', '在线访问', 'o', 'd'],
  [1, 'wrench', '显示/隐藏接口'],
  [1, 'com', 'COM <3> [RS232/PPI 多主站编程电缆]', 'c', 'q'],
  [1, 'com', 'COM <4> [RS232/PPI 多主站编程电缆]', 'c', 'q'],
];

const FoldHead = styled.button`
  display: flex; align-items: center; width: 100%; height: 21px; flex: none; font-size: 15px; font-weight: 700; text-align: left; background: ${bevel}; border-bottom: 1px solid #777;
  > span:first-child { width: 20px; height: 100%; display: flex; align-items: center; justify-content: center; border-right: 1px solid #777; margin-right: 5px; }
`;
const Fold = ({ open, children }: { open?: boolean; children: ReactNode }) => (
  <FoldHead aria-expanded={!!open}><span><Chev dir={open ? 'down' : 'right'} color="#111" /></span>{children}</FoldHead>
);
const Detail = styled.section`height: 193px; flex: none; display: flex; flex-direction: column; border-top: 3px solid #1b2230; background: #ebebeb;`;
const IconCell = styled.td`&& { padding: 0; text-overflow: clip; } svg { margin: auto; }`;
const Picked = styled.td`&& { background: #d0d5dd; outline: 1px dashed #888; outline-offset: -1px; }`;
const ScrollColumn = styled.div`display: flex; padding-top: 19px; background: #d6d6d6; border-top: 1px solid #aaa;`;

const LeftPanel = () => (
  <Left>
    <PanelHead $active><h2>项目树</h2><Spacer /><WinGlyph name="cols" /><WinGlyph name="left" /></PanelHead>
    <Strip><Tab>设备</Tab></Strip>
    <Bar $pad={4}>
      <ToolButton aria-label="新建组"><Icon name="addFolder" /></ToolButton><Spacer /><Sep />
      <ToolButton $on aria-label="列表"><Icon name="listView" /></ToolButton>
      <ToolButton aria-label="导出"><Icon name="exportList" /></ToolButton>
    </Bar>
    <GreyBand />
    <Row>
      <Clip>
        <ul>
          {tree.map(([lvl, icon, text, tri, kind], i) => (
            <TreeRow key={i} $dark={kind === 'd' || kind === 'b'} $sel={kind === 's'} $strong={kind === 'b'}>
              <TreeCell $lvl={lvl} $sel={kind === 's'}>
                <Slot>{tri && <Tri open={tri === 'o'} />}</Slot><Icon name={icon} /><TreeText>{text}</TreeText>
              </TreeCell>
              {kind === 'q' && <Icon name="card" />}
            </TreeRow>
          ))}
        </ul>
      </Clip>
      <VScroll before={0} size={230} after={360} />
    </Row>
    <Detail>
      <Fold open>详细视图</Fold>
      <Strip $h={26}><Tab>模块</Tab></Strip>
      <Bar />
      <Row>
        <Clip>
          <Table>
            <Cols w={[18, 161, null]} />
            <thead><tr><th /><th>名称</th><th /></tr></thead>
            <tbody>
              <Tr><IconCell><Icon name="config" /></IconCell><Picked>设备组态</Picked><td /></Tr>
              {[['diag', '在线和诊断'], ['blocks', '程序块'], ['tech', '工艺对象'], ['source', '外部源文件']].map(([ic, t]) => (
                <Tr key={t}><IconCell><Icon name={ic} /></IconCell><td>{t}</td><td /></Tr>
              ))}
              <Tr><td /><td /><td /></Tr>
            </tbody>
          </Table>
        </Clip>
        <ScrollColumn><VScroll before={0} size={0} after={43} /></ScrollColumn>
      </Row>
    </Detail>
  </Left>
);

/* ---------- centre ---------- */
const Center = styled.section`flex: 1; min-width: 0; display: flex; flex-direction: column; background: #ebebeb;`;
const BlockName = styled.h3`height: 21px; flex: none; padding-left: 25px; font-size: 14px; line-height: 20px; font-weight: 600; background: #dadada;`;
const TableBox = styled.div<{ $h: number }>`height: ${p => p.$h}px; flex: none; overflow: hidden;`;
const NumTd = styled.td<{ $sel?: boolean }>`&& { background: ${p => (p.$sel ? '#c4ccd8' : '#cacaca')}; color: #777; }`;
const Bullet = styled.span`width: 5px; height: 5px; background: #2c50b8;`;
const Hint = styled.span`color: #888;`;
const Splitter = styled.div`height: 8px; flex: none; background: #dcdcdc; border-top: 1px solid #888; border-bottom: 1px solid #888;`;
const Favorites = styled.div`display: flex; gap: 2px; flex: none; height: 38px; padding: 1px 1px 3px;`;
const FavButton = styled.button`width: 32px; background: #fff; display: flex; align-items: center; justify-content: center;`;
const BoxMark = styled.span`border: 1px solid #10183c; padding: 0 3px; font-size: 12px; line-height: 12px; margin-left: 8px;`;
const Ladder = styled.div`display: flex; flex: none; height: 99px; background: #fff;`;
const Network = styled.div`margin-left: 26px; width: 400px; border-left: 2px solid #000; height: 99px;`;
const Rung = styled.div`border-top: 2px solid #000; margin-top: 25px; padding: 13px 0 0 43px; width: 180px; line-height: 16px;`;
const Operand = styled.div`padding-left: 28px; color: #0c8c94; font-weight: 700;`;
const ZoomBar = styled.div`display: flex; justify-content: flex-end; align-items: center; gap: 18px; height: 18px; flex: none; padding-right: 36px; background: #e6e6e6;`;
const ZoomSelect = styled.select`appearance: none; width: 60px; height: 18px; border: 1px solid #888; background: #fff; padding: 0 4px; line-height: 16px;`;
const ZoomPick = styled.span`display: flex; > span { width: 18px; height: 18px; margin-left: -18px; pointer-events: none; display: flex; align-items: center; justify-content: center; background: #e4e4e4; border: 1px solid #777; }`;
const Range = styled.input`
  appearance: none; width: 66px; height: 18px; background: linear-gradient(#666, #666) 0 8px / 100% 1px no-repeat, repeating-linear-gradient(90deg, #222 0 1px, transparent 1px 5px) 0 15px / 100% 3px no-repeat;
  &::-webkit-slider-thumb { appearance: none; width: 7px; height: 9px; background: #ccc; border: 1px solid #777; border-radius: 0 0 3px 3px; }
`;
const InfoHead = styled.div`display: flex; align-items: flex-end; justify-content: flex-end; height: 30px; flex: none; background: #b1b1b1; border-top: 3px solid #1b2230; border-bottom: 3px solid #2b3451; padding-right: 4px;`;
const InfoTab = styled.button`display: flex; align-items: center; gap: 4px; width: 88px; height: 21px; padding: 0 0 2px 14px; font-size: 15px; color: #444; background: linear-gradient(#e4e4e4, #c4c4c4); border: 1px solid #888; border-bottom: 0; margin-right: 20px;`;
const HeadGlyphs = styled.span`display: flex; gap: 7px; align-self: center;`;
const Filter = styled.select`appearance: none; width: 130px; height: 18px; margin-left: 5px; border: 1px solid #888; background: #fff; padding: 0 4px; line-height: 16px;`;
const Pale = styled.div`height: 20px; flex: none; background: #efefef;`;
const MsgScroll = styled.div`display: flex; padding-top: 19px; border-top: 1px solid #aaa; background: #d6d6d6;`;
const SideScroll = styled.div`display: flex; height: 99px; margin-left: auto;`;
const MsgTr = styled.tr<{ $tone: string }>`
  && td { border-right: 0; background: ${p => (p.$tone === 'dark' ? '#e0e0e0' : p.$tone === 'sel' ? '#d0d5dd' : '#efefef')}; }
  && td:last-child { background: #efefef; }
`;

type Var = [number, string, string, string, string?];
const vars: Var[] = [
  [1, 'o', 'Input', ''], [2, 'b', 'Initial_Call', 'Bool', 'Initial call of this OB'],
  [3, 'b', 'Remanence', 'Bool', '=True, if remanent data are available'],
  [4, 'o', 'Temp', ''], [5, 'n', '<新增>', ''], [6, 'o', 'Constant', ''], [7, 'n', '<新增>', ''],
];
type Msg = [number, string, string, string, string?];
const msgs: Msg[] = [
  [0, 'o', '开始下载到设备。', ''], [1, 'o', 'PLC_1', ''], [2, 'o', '硬件配置', ''], [3, '', 'PLC_1', ''], [3, '', '硬件配置下载成功。', ''],
  [3, '', '成功下载连接组态。', '18:06:02'], [3, '', '证书组态已成功加载。', '18:06:02'], [3, '', '路由组态加载成功。', '18:06:02'],
  [0, '', '扫描接口 Realtek PCIe GbE Family Controller 上的设备已完成。在网络上找到了 1 个设...', '18:05:50', 'infoMark'],
  [0, '', '下载完成（错误：0；警告：0）。', '18:06:07'], [0, 'o', '开始下载到设备。', '18:06:14'], [1, 'o', 'PLC_1', '18:06:14'],
  [2, '', "'TSEND_C_DB' 下载成功。", '18:06:20'], [2, '', "'通讯数据存储' 下载成功。", '18:06:20'], [2, '', "'PLC_1_Send_DB' 下载成功。", '18:06:20'],
  [2, '', "'TRCV_DB' 下载成功。", '18:06:20'], [2, '', "'TSEND_C' 下载成功。", '18:06:20'], [2, '', "'Main' 下载成功。", '18:06:20'],
];
const editorTools = ['contactNew', 'contactDel', 'rowNew', 'rowNew', '|', 'dbUndo', '|', 'rowsGrey', 'netOpen', 'netClose', '*comment', 'tagPair', '+', 'tagGrey', '+', 'tagKey', '+', '*netView', '*star', '|', 'hop1', 'hop2', 'hop3', 'hop4', 'verify', '|', 'goLine', 'indent', 'outdent', '|', 'jumpDown', 'jumpUp', '|', 'searchNode', 'glasses', '|', 'dbLock'];
const Tools = ({ list }: { list: string[] }) => (
  <>{list.map((t, i) => t === '|' ? <Sep key={i} /> : t === '+' || t === '-'
    ? <ToolButton key={i} $narrow aria-label="更多"><DropMark color={t === '-' ? '#888' : '#111'} /></ToolButton>
    : <ToolButton key={i} $on={t[0] === '*'} aria-label={t.replace('*', '')}><Icon name={t.replace('*', '')} /></ToolButton>)}</>
);
const contacts = ['M0 6h8M8 1v10M15 1v10M15 6h8', 'M0 6h8M8 1v10M15 1v10M15 6h8M10 10l3-8', 'M0 6h8M11 2c-3 2-3 6 0 8M13 2c3 2 3 6 0 8M16 6h8'];

const CenterPanel = () => (
  <Center>
    <PanelHead $small>
      <span>TCP通讯：PLC和调试助手</span><Tri color="#fff" /><span>PLC_1 [CPU 1211C DC/DC/DC]</span><Spacer />
      <WinGlyph name="min" /><WinGlyph name="restore" /><WinGlyph name="max" /><WinGlyph name="close" />
    </PanelHead>
    <Strip />
    <Bar><Tools list={editorTools} /><Spacer /><ToolButton aria-label="布局"><Icon name="layoutUser" /></ToolButton></Bar>
    <BlockName>Main</BlockName>
    <TableBox $h={204}>
      <Table>
        <Cols w={[24, 19, 191, 119, 100, 301, null]} />
        <thead><tr><th /><th /><th>名称</th><th>数据类型</th><th>默认值</th><th>注释</th><th /></tr></thead>
        <tbody>
          {vars.map(([n, kind, name, type, note]) => (
            <Tr key={n} $bg={kind === 'n' ? '#efefef' : '#e0e0e0'}>
              <NumTd $sel={n === 2}>{n}</NumTd>
              <IconCell>{kind !== 'n' && <Icon name="tag" />}</IconCell>
              <td><Cell><Slot $w={10}>{kind === 'o' ? <Tri open /> : <Bullet />}</Slot><Slot $w={kind === 'o' ? 10 : 28} />{kind === 'n' ? <Hint>{name}</Hint> : name}</Cell></td>
              <td>{type}</td><td /><td>{note}</td><td />
            </Tr>
          ))}
          <Blank n={3} c={7} bg="#e0e0e0" />
        </tbody>
      </Table>
    </TableBox>
    <Splitter />
    <Favorites>
      {contacts.map((d, i) => <FavButton key={i} aria-label="指令"><svg width="24" height="14" viewBox="0 0 24 14"><path d={d} fill="none" stroke="#10183c" strokeWidth="2" /></svg></FavButton>)}
      <FavButton><BoxMark>??</BoxMark></FavButton>
    </Favorites>
    <Ladder>
      <Network><Rung><Operand>%M0.5</Operand><div>"Clock_1Hz"</div></Rung></Network>
      <SideScroll><VScroll before={12} size={0} after={35} /></SideScroll>
    </Ladder>
    <ZoomBar>
      <ZoomPick><ZoomSelect aria-label="缩放"><option>100%</option></ZoomSelect><span><Tri open /></span></ZoomPick>
      <Range type="range" aria-label="缩放比例" defaultValue={33} />
    </ZoomBar>
    <InfoHead><InfoTab><Icon name="diag" />诊断</InfoTab><HeadGlyphs><WinGlyph name="restore" /><WinGlyph name="rows" /><WinGlyph name="down" /></HeadGlyphs></InfoHead>
    <Strip $h={25}><Tab>常规</Tab><Tab $off>交叉引用</Tab></Strip>
    <Bar $pad={2}>
      <ToolButton $on aria-label="错误"><Icon name="errMark" /></ToolButton><ToolButton $on aria-label="警告"><Icon name="warnMark" /></ToolButton><ToolButton $on aria-label="信息"><Icon name="infoMark" /></ToolButton>
      <Filter aria-label="筛选"><option>显示所有消息</option></Filter>
    </Bar>
    <Pale />
    <Row>
      <Clip>
        <Table>
          <Cols w={[28, 628, 72, 155, null]} />
          <thead><tr><th>!</th><th>消息</th><th /><th /><th /></tr></thead>
          <tbody>
            {msgs.map(([lvl, tri, text, time, icon], i) => (
              <MsgTr key={i} $tone={i === 0 || i === 10 ? 'dark' : i === 17 ? 'sel' : ''}>
                <IconCell><Icon name={icon ?? 'ok'} /></IconCell>
                <td><Cell $lvl={lvl}><Slot $w={14}>{tri && <Tri open />}</Slot><Slot $w={6} />{text}</Cell></td>
                <td>{time && '2024/9/1'}</td><td>{time}</td><td />
              </MsgTr>
            ))}
            <Blank n={3} c={5} />
          </tbody>
        </Table>
      </Clip>
      <MsgScroll><VScroll before={26} size={127} after={140} /></MsgScroll>
    </Row>
  </Center>
);

/* ---------- right ---------- */
const Right = styled.section`width: 396px; flex: none; display: flex; flex-direction: column; background: #efefef; margin-right: -2px;`;
const OptionsHead = styled.h3`height: 28px; flex: none; padding: 5px 6px 0; font-size: 15px; line-height: 20px; font-weight: 700; background: linear-gradient(#ebebeb 6px, #fafafa 7px, #dedede); border-bottom: 1px solid #6f7178;`;
const SearchBox = styled.input`width: 120px; height: 18px; border: 1px solid #777; background: #fff; margin-right: 5px; padding: 0 4px;`;
const GapLine = styled.div`height: 3px; flex: none; background: #9a9a9a;`;
const TabRail = styled.nav`width: 24px; flex: none; background: #b1b1b1; padding-top: 30px; display: flex; flex-direction: column; gap: 3px;`;
const RailTab = styled.button<{ $h: number; $on?: boolean }>`
  width: 20px; height: ${p => p.$h}px; padding-top: 2px; display: flex; flex-direction: column; align-items: center; gap: 5px; font-size: 14px; line-height: 16px;
  border: 1px solid #777; background: ${p => (p.$on ? '#f0f0f0' : '#cfcfcf')}; color: ${p => (p.$on ? '#111' : '#555')}; font-weight: ${p => (p.$on ? 700 : 500)};
  span { writing-mode: vertical-rl; text-orientation: sideways; }
  > span:only-child { margin-top: 9px; }
`;

type Ins = [number, string, string, string, string, string?];
const basic: Ins[] = [
  [0, 'c', 'folder', '常规', '', ''], [0, 'c', 'fBit', '位逻辑运算', '', 'V1.0'], [0, 'c', 'fTimer', '定时器操作', '', 'V1.0'], [0, 'c', 'fCount', '计数器操作', '', 'V1.0'],
  [0, 'c', 'fCmp', '比较操作', '', ''], [0, 'c', 'fMath', '数学函数', '', 'V1.0'], [0, 'c', 'fMove', '移动操作', '', 'V2.4'], [0, 'c', 'fConv', '转换操作', '', ''],
  [0, 'c', 'fCtrl', '程序控制指令', '', 'V1.1'], [0, 'c', 'fWord', '字逻辑运算', '', 'V1.4'], [0, 'c', 'fShift', '移位和循环', '', ''],
];
const comm: Ins[] = [
  [0, 'c', 'folder', 'S7 通信', '', 'V1.3'], [0, 'o', 'folder', '开放式用户通信', '', 'V7.0'],
  [1, '', 'fb', 'TSEND_C', '正在建立连接和发送...', 'V3.2'], [1, '', 'fb', 'TRCV_C', '正在建立连接和接收...', 'V3.2'], [1, '', 'fb', 'TMAIL_C', '发送电子邮件', 'V6.0'],
  [1, 'o', 'folder', '其它', '', ''],
  [2, '', 'fb', 'TCON', '建立通信连接', 'V4.0'], [2, '', 'fb', 'TDISCON', '断开通信连接', 'V2.1'], [2, '', 'fb', 'TSEND', '通过通信连接发送数据', 'V4.0'],
  [2, '', 'fb', 'TRCV', '通过通信连接接收数据', 'V4.0'], [2, '', 'fb', 'TUSEND', '通过以太网发送数据...', 'V4.0'], [2, '', 'fb', 'TURCV', '通过以太网接收数据...', 'V4.0'],
  [2, '', 'fb', 'T_RESET', '复位连接', 'V1.2'], [2, '', 'fb', 'T_DIAG', '检查连接', 'V1.2'], [2, '', 'fb', 'T_CONFIG', '组态接口', 'V1.0'],
  [0, 'c', 'folder', 'WEB 服务器', '', 'V1.1'], [0, 'c', 'folder', '其它', '', ''], [0, 'c', 'folder', '通信处理器', '', ''], [0, 'c', 'folder', '远程服务', '', 'V1.9'],
];
const NameTd = styled.td`&& { padding: 0; }`;
const NameText = styled.span`padding-left: 4px;`;
const InsTable = ({ rows, sel }: { rows: Ins[]; sel: number }) => (
  <Table>
    <Cols w={[182, 139, 51, null]} />
    <thead><tr><th>名称</th><th>描述</th><th>版本</th><th /></tr></thead>
    <tbody>
      {rows.map(([lvl, tri, icon, name, desc, ver], i) => (
        <Tr key={i} $sel={i === sel}>
          <NameTd><Cell $lvl={lvl}><Slot>{tri && <Tri open={tri === 'o'} />}</Slot><Icon name={icon} /><NameText>{name}</NameText></Cell></NameTd>
          <td>{desc}</td><td>{ver === 'V2.4' || ver === 'V7.0' ? <Link href="#version">{ver}</Link> : ver}</td><td />
        </Tr>
      ))}
      <Blank n={6} c={4} />
    </tbody>
  </Table>
);
const FlexClip = styled.div<{ $grow: number }>`flex: ${p => p.$grow} 1 0; min-height: 0; overflow: hidden;`;
const RightPanel = () => (
  <Right>
    <PanelHead><h2>指令</h2><Spacer /><WinGlyph name="restore" /><WinGlyph name="cols" /><WinGlyph name="right" /></PanelHead>
    <OptionsHead>选项</OptionsHead>
    <Bar $pad={6}>
      <SearchBox aria-label="搜索指令" /><Tools list={['find', 'findUp', '|', 'vGrey', 'vBlue']} /><Spacer /><Tools list={['plainView', 'listView']} />
    </Bar>
    <GapLine /><Fold>收藏夹</Fold><GapLine /><Fold open>基本指令</Fold>
    <FlexClip $grow={324}><InsTable rows={basic} sel={0} /></FlexClip>
    <GapLine /><Fold>扩展指令</Fold><GapLine /><Fold>工艺</Fold><GapLine /><Fold open>通信</Fold>
    <FlexClip $grow={390}><InsTable rows={comm} sel={9} /></FlexClip>
    <GapLine /><Fold>选件包</Fold>
  </Right>
);

/* ---------- dialog ---------- */
const ResultLayer = styled.div`position: absolute; inset: 0 0 40px; pointer-events: none; display: flex; align-items: center; justify-content: center;`;
const Dialog = styled.div`width: 788px; height: 468px; margin-top: -2px; display: flex; flex-direction: column; background: #cbcbcb; border: 1px solid #222; border-bottom: 7px solid #1b1b1b; outline: 1px solid #fff; pointer-events: auto;`;
const DialogTitle = styled.header`height: 21px; flex: none; display: flex; align-items: center; justify-content: space-between; padding: 0 2px 2px 5px; color: #fff; font-size: 15px; font-weight: 700; background: linear-gradient(#777, #444 30%, #1b1b1b 33%);`;
const DialogLead = styled.div`display: flex; align-items: center; gap: 5px; height: 48px; flex: none; padding: 2px 12px 8px;`;
const DialogBody = styled.div`margin: 0 12px; height: 289px; flex: none; overflow: hidden; background: #efefef;`;
const HTrack = styled.div`margin: 0 12px; flex: none;`;
const DialogFoot = styled.footer`margin-top: auto; height: 43px; display: flex; align-items: center; justify-content: flex-end; gap: 6px; padding: 0 12px; background: #b1b1b1; border-bottom: 1px solid #666;`;
const PushButton = styled.button`width: 90px; height: 20px; line-height: 16px; background: ${bevel}; border: 1px solid #777; &:disabled { color: #999; }`;
const PickTd = styled.td`&& { padding: 0; background: #fff; }`;
const Pick = styled.span`display: flex; margin-left: 20px; height: 18px; > span { width: 16px; margin-left: -16px; pointer-events: none; display: flex; align-items: center; justify-content: center; background: #e8e8e8; border: 1px solid #777; }`;
const PickSelect = styled.select`appearance: none; flex: 1; height: 18px; border: 1px solid #5b84d8; background: #2f66d8; color: #fff; padding: 0 4px; line-height: 16px;`;
const Indent = styled.span`padding-left: 20px;`;
const Pointer = styled.svg`position: absolute; left: calc(50% + 181px); top: calc(50% + 216px);`;

const ResultDialog = () => (
  <ResultLayer>
    <Dialog role="dialog" aria-label="下载结果">
      <DialogTitle><h2>下载结果</h2><GlyphButton aria-label="关闭"><WinGlyph name="close" /></GlyphButton></DialogTitle>
      <DialogLead><Icon name="question" size={32} /><p>下载到设备后的状态和动作</p></DialogLead>
      <DialogBody>
        <Table>
          <Cols w={[50, 30, 150, 365, 149, null]} />
          <thead><tr><th>状态</th><th>!</th><th>目标</th><th>消息</th><th>动作</th><th /></tr></thead>
          <tbody>
            <Tr $bg="#e0e0e0"><IconCell><Icon name="loadDown" /></IconCell><IconCell><Icon name="ok" /></IconCell>
              <td><Cell><Slot $w={10}><Tri open /></Slot><Slot $w={10} />PLC_1</Cell></td><td>下载到设备已顺利完成。</td><td><Indent>加载“PLC_1”</Indent></td><td /></Tr>
            <Blank n={1} c={6} />
            <Tr $bg="#e0e0e0"><td /><IconCell><Icon name="ok" /></IconCell>
              <td><Cell $lvl={1}><Slot $w={10}><Tri /></Slot><Slot $w={10} />启动模块</Cell></td><td>下载到设备后启动模块。</td>
              <PickTd><Pick><PickSelect aria-label="动作"><option>启动模块</option></PickSelect><span><Tri open /></span></Pick></PickTd><td /></Tr>
            <Blank n={12} c={6} />
          </tbody>
        </Table>
      </DialogBody>
      <HTrack><Track $flat>
        <TrackButton aria-label="向左"><Chev dir="left" /></TrackButton><Thumb $flat $grow={1}><Grip flat /></Thumb><TrackButton aria-label="向右"><Chev dir="right" /></TrackButton>
      </Track></HTrack>
      <DialogFoot><PushButton>完成</PushButton><PushButton disabled>装载</PushButton><PushButton>取消</PushButton></DialogFoot>
    </Dialog>
    <Pointer width="12" height="19" viewBox="0 0 12 19" aria-hidden="true"><path d="M1 1v14l3-3 3 6 2-1-3-6h5z" fill="#fff" stroke="#222" /></Pointer>
  </ResultLayer>
);

/* ---------- recorder ---------- */
const RecorderLayer = styled.div`position: absolute; top: 0; left: 0; right: 0; display: flex; justify-content: center; pointer-events: none;`;
const Recorder = styled.div`width: 384px; height: 96px; background: #fff; border: 1px solid #ccc; box-shadow: 0 4px 14px rgba(0, 0, 0, .4); pointer-events: auto;`;
const RecHead = styled.div`display: grid; grid-template-columns: 1fr auto 1fr; align-items: center; height: 31px; padding: 0 11px; border-bottom: 1px solid #e4e4e4;`;
const RecEnd = styled.span`display: flex; justify-content: flex-end; gap: 12px;`;
const RecTools = styled.div`display: flex; justify-content: space-around; align-items: center; height: 63px;`;
const RecButton = styled.button`width: 62px; height: 40px; display: flex; align-items: center; justify-content: center;`;
const recIcons: [string, ReactNode][] = [
  ['区域', <><path d="M2 2h22v22" stroke="#777a85" strokeWidth="2" strokeDasharray="2 2" /><path d="M2 3v8M14 24h10" stroke="#777a85" strokeWidth="2" strokeDasharray="2 2" /><path d="M2 15h9v9H2zM12 13l7-7M14 6h5v5" stroke="#666975" strokeWidth="2" /></>],
  ['暂停', <><circle cx="13" cy="13" r="10.500" stroke="#e0493c" strokeWidth="2" /><path d="M10 8v10M16 8v10" stroke="#e0493c" strokeWidth="2" /></>],
  ['停止', <><circle cx="13" cy="13" r="10.500" stroke="#5c5f6e" strokeWidth="2" /><path d="M8 8h10v10H8z" fill="#4c5064" /></>],
  ['麦克风', <><rect x="9.500" y="2.500" width="7" height="14" rx="3.500" stroke="#7d808c" strokeWidth="2" /><path d="M5.500 12c0 10 15 10 15 0M13 20v4M8 24h10" stroke="#7d808c" strokeWidth="2" /></>],
  ['摄像头', <><circle cx="13" cy="10.500" r="9.500" stroke="#7d808c" strokeWidth="1.800" /><circle cx="13" cy="10.500" r="5" fill="#7d808c" /><circle cx="14.500" cy="9" r="1.800" fill="#fff" /><path d="M5.500 18c-5 9 20 9 15 0" stroke="#7d808c" strokeWidth="1.800" /></>],
  ['设置', <><path d="M10.500 2h5l1 3.500 2.500 1.500 3.500-1 2.500 4.500-2.500 2.500 2.500 3-2.500 4-3.500-.800-2.500 1.500-1 3.300h-5l-1-3.300-2.500-1.500-3.500.800-2.500-4 2.500-3-2.500-2.500 2.500-4.500 3.500 1 2.500-1.500z" stroke="#7d808c" strokeWidth="2" strokeLinejoin="round" /><circle cx="13" cy="13" r="4" stroke="#7d808c" strokeWidth="2" /></>],
];
const RecorderBar = () => (
  <RecorderLayer><Recorder>
    <RecHead><span>00:09:54</span><span>万彩办公大师 - 录屏工具</span>
      <RecEnd><svg width="12" height="12" viewBox="0 0 12 12"><path d="M1 6h10" stroke="#aaa" strokeWidth="1.500" /></svg><svg width="12" height="12" viewBox="0 0 12 12"><path d="M2 1l8 10M10 1L2 11" stroke="#999" strokeWidth="1.500" /></svg></RecEnd>
    </RecHead>
    <RecTools>{recIcons.map(([n, ic]) => <RecButton key={n} aria-label={n}><svg width="26" height="26" viewBox="0 0 26 26" fill="none">{ic}</svg></RecButton>)}</RecTools>
  </Recorder></RecorderLayer>
);

/* ---------- bottom bars ---------- */
const PortalBar = styled.footer`height: 30px; flex: none; display: flex; align-items: center; gap: 3px; padding: 0 6px 0 0; background: #1b1b1b; color: #fff;`;
const PortalButton = styled.button`display: flex; align-items: center; gap: 8px; width: 178px; padding-left: 33px; font-size: 14px; font-weight: 600; color: #fff;`;
const DocTab = styled.button<{ $on?: boolean }>`width: 113px; height: 20px; display: flex; align-items: center; gap: 4px; padding: 0 3px; background: ${p => (p.$on ? '#fff' : '#c4c4c4')}; color: #111; white-space: nowrap; font-weight: ${p => (p.$on ? 600 : 400)};`;
const StatusIcon = styled.span`padding: 1px; background: #c4c4c4; margin-right: 4px;`;
const Status = styled.p`display: flex; align-items: center; gap: 5px; width: 325px; height: 30px; padding-left: 4px; border-left: 1px solid #555; font-size: 13px;`;
const Taskbar = styled.footer`height: 40px; flex: none; display: flex; align-items: center; background: linear-gradient(90deg, #20353f, #203c48 35%, #1e3050 75%, #1b2a44); color: #fff;`;
const StartButton = styled.button`width: 48px; height: 40px; display: flex; align-items: center; justify-content: center;`;
const SearchLabel = styled.label`display: flex; align-items: center; gap: 10px; width: 288px; height: 39px; margin-top: 1px; padding-left: 11px; background: #f2f2f2; color: #333; font-size: 14px; margin-right: 2px;`;
const SearchField = styled.input`border: 0; background: none; width: 200px; &::placeholder { color: #333; opacity: 1; }`;
const TaskItem = styled.button<{ $run?: boolean; $on?: boolean }>`width: 45px; height: 40px; margin: 0 2px; display: flex; align-items: center; justify-content: center; border-bottom: 2px solid ${p => (p.$run ? '#76b4e8' : 'transparent')}; ${p => p.$on && 'background: #4d626b;'}`;
const TiaTile = styled.span`width: 24px; height: 24px; background: #343a50; color: #fff; font-size: 12px; line-height: 12px; font-weight: 600; span { color: #b0b4f0; display: block; }`;
const AppTile = styled.span<{ $bg: string }>`width: 24px; height: 24px; border-radius: 4px; background: ${p => p.$bg}; color: #fff; font-size: 13px; line-height: 24px; font-weight: 600;`;
const Tray = styled.div`display: flex; align-items: center; gap: 8px; font-size: 15px;`;
const Clock = styled.time`font-size: 12px; line-height: 18px; width: 64px; text-align: center;`;
const Notice = styled.button`width: 46px; display: flex; justify-content: center; padding-right: 6px; border-right: 1px solid #668; height: 40px; align-items: center; margin-right: 4px;`;

const TaskIcon = ({ kind }: { kind: string }) => (
  <svg width="24" height="24" viewBox="0 0 24 24" fill="none" aria-hidden="true">
    {kind === 'files' && <><path d="M1 3h8l2 3h12v15H1z" fill="#f0b93c" /><path d="M1 8h22v13H1z" fill="#fcd667" /><path d="M5 21v-7h14v7h-4v-3H9v3z" fill="#3d8fd0" /></>}
    {kind === 'calc' && <><path d="M3 0h18v24H3z" fill="#788898" /><path d="M5 2h14v5H5z" fill="#5cc0ee" /><path d="M5 9h4v4H5zM10 9h4v4h-4zM15 9h4v4h-4zM5 14h4v4H5zM10 14h4v4h-4zM5 19h4v4H5zM10 19h4v4h-4z" fill="#e8eef2" /><path d="M15 14h4v9h-4z" fill="#1c4c90" /></>}
    {kind === 'excel' && <><path d="M6 1h18v22H6z" fill="#21a366" /><path d="M15 1h9v7h-9z" fill="#33c481" /><path d="M6 12h18v11H6z" fill="#107c41" /><path d="M0 6h13v13H0z" fill="#0f6b38" /><path d="M4 9l5 7M9 9l-5 7" stroke="#fff" strokeWidth="2" /></>}
    {kind === 'edge' && <><circle cx="12" cy="12" r="12" fill="#1b74c4" /><path d="M1 9C4-3 23-2 24 10c0 5-6 6-9 4c3-4-1-8-6-7c-4 0-7 1-8 2z" fill="#4cc878" /><path d="M1 9c5-7 13-4 14 1c-7-2-9 8 0 11c-9 5-17-4-14-12z" fill="#2ba0e4" /><path d="M10 12c-2 6 5 10 12 6c-5 8-15 5-15-2c0-2 1-4 3-4z" fill="#0c4c8c" /></>}
  </svg>
);
const trayIcons: [string, ReactNode][] = [
  ['chev', <path d="M3 11l5-5 5 5" />],
  ['mic', <><rect x="5" y="1" width="6" height="10" rx="3" fill="#fff" /><path d="M3 9c0 5 10 5 10 0M8 13v3" /></>],
  ['power', <><path d="M5 5h10v7H5zM1 3v4M0 5h4v4" /><path d="M7 7h6v3H7z" fill="#fff" /></>],
  ['vol', <path d="M1 6h3l3-3v10l-3-3H1zM10 6c1 1 1 3 0 4M12 4c2 2 2 6 0 8M14 2c3 3 3 9 0 12" />],
  ['wifi', <path d="M2 14C2 7 8 2 15 2M5 14c0-5 4-9 10-9M8 14c0-3 3-6 7-6M11 14c0-2 2-3 4-3" />],
];

const mainTools = ['print', '|', 'cut', 'copy', 'paste', 'del', '|', 'undo', '+', 'redo', '-', '|', 'compile', 'download', 'upload', 'pc', 'rt', '|'];

export default function App() {
  return (
    <Screen>
      <Global />
      <Desktop>
        <TitleBar>
          <AppBadge>TIA V16</AppBadge>
          <TitleText>{'Siemens   -   C:\\Users\\spxu\\Desktop\\TCP通讯：PLC和调试助手\\TCP通讯：PLC和调试助手\\TCP通讯：PLC和调试助手'}</TitleText>
          <GlyphButton aria-label="最小化"><WinGlyph name="min" /></GlyphButton><GlyphButton aria-label="还原"><WinGlyph name="restore" /></GlyphButton><GlyphButton aria-label="关闭"><WinGlyph name="close" /></GlyphButton>
        </TitleBar>
        <Head>
          <div>
            <MenuBar>{['项目(P)', '编辑(E)', '视图(V)', '插入(I)', '在线(O)', '选项(N)', '工具(T)', '窗口(W)', '帮助(H)'].map(m => <button key={m}>{m}</button>)}</MenuBar>
            <Bar $pad={9} $h={24}>
              <Tools list={['newProject', 'openProject', 'save']} /><TextButton>保存项目</TextButton><Sep />
              <Tools list={mainTools} />
              <TextButton><Icon name="online" />转至在线</TextButton><TextButton $off><Icon name="offline" />转至离线</TextButton>
              <Tools list={['|', 'accessible', 'start', 'stop', '|', 'crossRef', '|', 'split']} />
            </Bar>
          </div>
          <Brand><BrandLine>Totally Integrated Automation</BrandLine><BrandPortal>PORTAL</BrandPortal></Brand>
        </Head>
        <Work>
          <Rail><RailLabel><span>PLC 编程</span></RailLabel></Rail>
          <LeftPanel />
          <CenterPanel />
          <RightPanel />
          <TabRail>
            <RailTab $h={74} $on><Icon name="grid" /><span>指令</span></RailTab>
            <RailTab $h={73}><Icon name="diag" /><span>测试</span></RailTab>
            <RailTab $h={73}><Icon name="task" /><span>任务</span></RailTab>
            <RailTab $h={57}><Icon name="book" /><span>库</span></RailTab>
            <RailTab $h={61}><span>插件</span></RailTab>
          </TabRail>
        </Work>
        <PortalBar>
          <PortalButton><WinGlyph name="left" />Portal 视图</PortalButton>
          <DocTab><Icon name="overview" />总览</DocTab><DocTab><Icon name="network" />PLC_1</DocTab><DocTab $on><Icon name="ob" />Main (OB1)</DocTab><DocTab><Icon name="db" />通讯数据存...</DocTab>
          <Spacer /><StatusIcon><Icon name="statusCard" /></StatusIcon>
          <Status><Icon name="ok" />下载完成（错误：0；警告：0）。</Status>
        </PortalBar>
        <RecorderBar />
      </Desktop>
      <ResultDialog />
      <Taskbar>
        <StartButton aria-label="开始"><svg width="16" height="16" viewBox="0 0 16 16"><path d="M0 2.500l7-1v6H0zM8 1.300L16 0v7.500H8zM0 8.500h7v6l-7-1zM8 8.500h8V16l-8-1.300z" fill="#fff" /></svg></StartButton>
        <SearchLabel><svg width="18" height="18" viewBox="0 0 18 18" fill="none"><circle cx="11" cy="7" r="5.500" stroke="#222" strokeWidth="1.500" /><path d="M7 11l-5 6" stroke="#222" strokeWidth="1.500" /></svg><SearchField placeholder="搜索" aria-label="搜索" /></SearchLabel>
        <TaskItem $run aria-label="文件"><TaskIcon kind="files" /></TaskItem><TaskItem aria-label="计算器"><TaskIcon kind="calc" /></TaskItem>
        <TaskItem $run><TiaTile>TIA<span>V18</span></TiaTile></TaskItem><TaskItem $run aria-label="Excel"><TaskIcon kind="excel" /></TaskItem>
        <TaskItem $run $on><TiaTile>TIA<span>V16</span></TiaTile></TaskItem><TaskItem $run aria-label="Edge"><TaskIcon kind="edge" /></TaskItem>
        <TaskItem $run><AppTile $bg="#3584e4">OB</AppTile></TaskItem><TaskItem $run><AppTile $bg="#ff6426">CP</AppTile></TaskItem>
        <Spacer />
        <Tray>{trayIcons.map(([n, ic]) => <svg key={n} width="16" height="16" viewBox="0 0 16 16" fill="none" stroke="#fff" strokeWidth="1.300">{ic}</svg>)}<span>英</span>
          <Clock>18:06<br />2024/9/1</Clock>
          <Notice aria-label="通知"><svg width="18" height="18" viewBox="0 0 18 18" fill="none" stroke="#fff" strokeWidth="1.300"><path d="M1 2h15v11h-4v3l-3-3H1z" /></svg></Notice>
        </Tray>
      </Taskbar>
    </Screen>
  );
}
